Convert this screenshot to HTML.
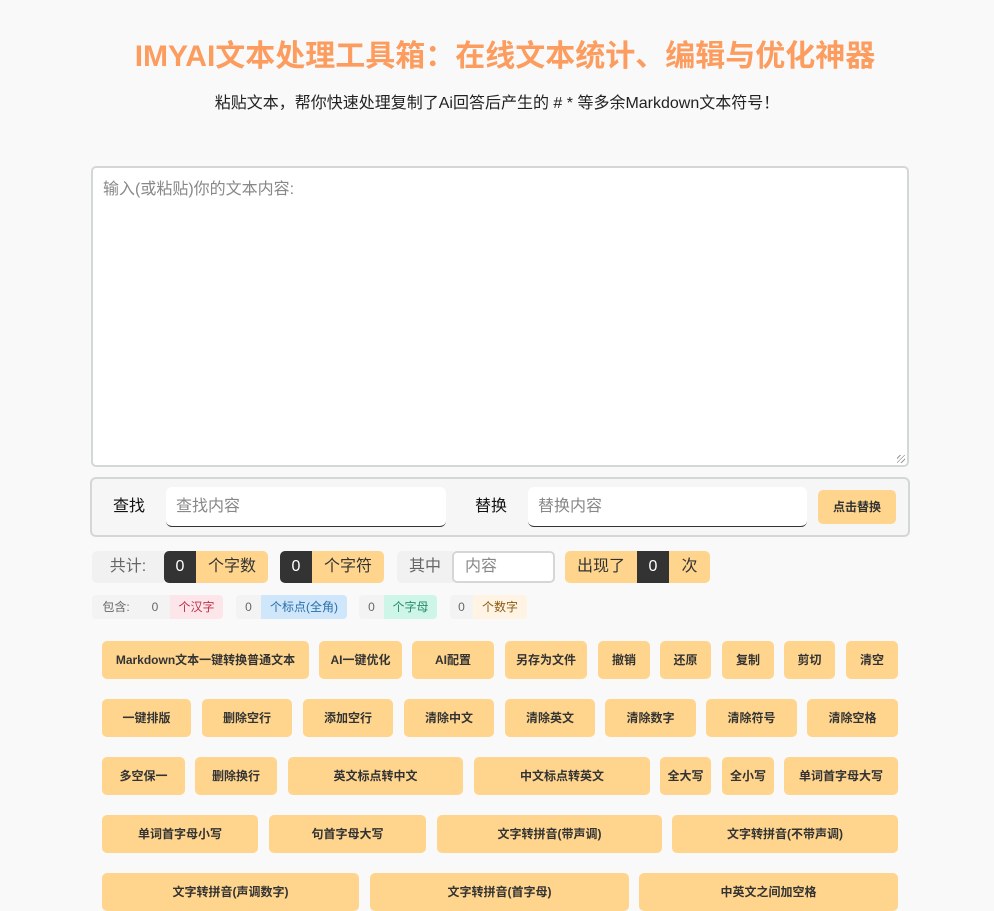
<!DOCTYPE html>
<html><head><meta charset="utf-8">
<style>
*{box-sizing:border-box;margin:0;padding:0}
body{width:994px;height:893px;overflow:hidden;background:#f9f9f9;font-family:"Liberation Sans","Noto Sans CJK SC",sans-serif;position:relative}
.a{position:absolute}
h1{position:absolute;left:8px;width:994px;top:37px;text-align:center;font-size:30px;font-weight:bold;color:#fc9c5f;line-height:40px}
.sub{left:0;width:994px;top:93px;text-align:center;font-size:16px;color:#222;line-height:22px}
.ta{left:91px;top:166px;width:818px;height:301px;border:2px solid #d3d8d7;border-radius:5px;background:#fff}
.ta span{position:absolute;left:10px;top:7px;font-size:16px;color:#888}
.grip{position:absolute;right:2px;bottom:2px;width:8px;height:8px;background:repeating-linear-gradient(135deg,transparent 0 2px,#999 2px 3px)}
.find{left:90px;top:477px;width:820px;height:60px;border:2px solid #d3d8d7;border-radius:6px;background:#f6f6f6}
.lbl{font-size:16px;color:#111;line-height:20px}
.inp{background:#fff;border-radius:6px;border-bottom:1.5px solid #333;font-size:16px;color:#888;padding-left:10px;line-height:40px}
.btn{position:absolute;background:#ffd58e;border-radius:5px;font-size:12px;font-weight:bold;color:#333;text-align:center;line-height:38px;white-space:nowrap}
.st{position:absolute;top:551px;height:32px;line-height:32px;font-size:16px;text-align:center}
.dk{background:#333;color:#fff}
.or{background:#ffd58e;color:#333}
.gr{background:#f1f1f1;color:#666}
.sm{position:absolute;top:595px;height:24px;line-height:24px;font-size:12px;text-align:center;color:#666}
</style></head><body>
<h1>IMYAI文本处理工具箱：在线文本统计、编辑与优化神器</h1>
<div class="a sub">粘贴文本，帮你快速处理复制了Ai回答后产生的 # * 等多余Markdown文本符号！</div>
<div class="a ta"><span>输入(或粘贴)你的文本内容:</span><div class="grip"></div></div>
<div class="a find"></div>
<div class="a lbl" style="left:113px;top:497px">查找</div>
<div class="a inp" style="left:166px;top:487px;width:280px;height:40px">查找内容</div>
<div class="a lbl" style="left:475px;top:497px">替换</div>
<div class="a inp" style="left:528px;top:487px;width:279px;height:40px">替换内容</div>
<div class="btn" style="left:818px;top:490px;width:78px;height:34px;line-height:34px">点击替换</div>

<div class="st gr" style="left:92px;width:72px;border-radius:5px 0 0 5px">共计:</div>
<div class="st dk" style="left:164px;width:32px;border-radius:5px 0 0 5px">0</div>
<div class="st or" style="left:196px;width:72px;border-radius:0 5px 5px 0">个字数</div>
<div class="st dk" style="left:280px;width:32px;border-radius:5px 0 0 5px">0</div>
<div class="st or" style="left:312px;width:72px;border-radius:0 5px 5px 0">个字符</div>
<div class="st gr" style="left:397px;width:56px;border-radius:5px 0 0 5px">其中</div>
<div class="st" style="left:452px;width:103px;background:#fff;border:2px solid #d3d8d7;border-radius:5px;text-align:left;padding-left:11px;color:#888;line-height:28px">内容</div>
<div class="st or" style="left:565px;width:72px;border-radius:5px 0 0 5px">出现了</div>
<div class="st dk" style="left:637px;width:32px">0</div>
<div class="st or" style="left:669px;width:41px;border-radius:0 5px 5px 0">次</div>

<div class="sm" style="left:92px;width:48px;background:#f3f3f3;border-radius:4px 0 0 4px">包含:</div>
<div class="sm" style="left:140px;width:30px;background:#f3f3f3">0</div>
<div class="sm" style="left:170px;width:53px;background:#fde6ea;color:#c0304a;border-radius:0 4px 4px 0">个汉字</div>
<div class="sm" style="left:236px;width:25px;background:#f3f3f3;border-radius:4px 0 0 4px">0</div>
<div class="sm" style="left:261px;width:86px;background:#cfe6fb;color:#2a6fa8;border-radius:0 4px 4px 0">个标点(全角)</div>
<div class="sm" style="left:359px;width:25px;background:#f3f3f3;border-radius:4px 0 0 4px">0</div>
<div class="sm" style="left:384px;width:53px;background:#cdf5e8;color:#2a8a6a;border-radius:0 4px 4px 0">个字母</div>
<div class="sm" style="left:450px;width:23px;background:#f3f3f3;border-radius:4px 0 0 4px">0</div>
<div class="sm" style="left:473px;width:54px;background:#fff4e4;color:#8a5a10;border-radius:0 4px 4px 0">个数字</div>

<div class="btn" style="left:102px;top:641px;width:207px">Markdown文本一键转换普通文本</div>
<div class="btn" style="left:319px;top:641px;width:83px">AI一键优化</div>
<div class="btn" style="left:412px;top:641px;width:82px">AI配置</div>
<div class="btn" style="left:505px;top:641px;width:82px">另存为文件</div>
<div class="btn" style="left:598px;top:641px;width:52px">撤销</div>
<div class="btn" style="left:660px;top:641px;width:51px">还原</div>
<div class="btn" style="left:722px;top:641px;width:52px">复制</div>
<div class="btn" style="left:784px;top:641px;width:51px">剪切</div>
<div class="btn" style="left:846px;top:641px;width:52px">清空</div>

<div class="btn" style="left:102px;top:699px;width:89px">一键排版</div>
<div class="btn" style="left:202px;top:699px;width:90px">删除空行</div>
<div class="btn" style="left:303px;top:699px;width:90px">添加空行</div>
<div class="btn" style="left:404px;top:699px;width:90px">清除中文</div>
<div class="btn" style="left:505px;top:699px;width:90px">清除英文</div>
<div class="btn" style="left:605px;top:699px;width:91px">清除数字</div>
<div class="btn" style="left:706px;top:699px;width:91px">清除符号</div>
<div class="btn" style="left:807px;top:699px;width:91px">清除空格</div>

<div class="btn" style="left:102px;top:757px;width:83px">多空保一</div>
<div class="btn" style="left:195px;top:757px;width:82px">删除换行</div>
<div class="btn" style="left:288px;top:757px;width:175px">英文标点转中文</div>
<div class="btn" style="left:474px;top:757px;width:176px">中文标点转英文</div>
<div class="btn" style="left:660px;top:757px;width:51px">全大写</div>
<div class="btn" style="left:722px;top:757px;width:52px">全小写</div>
<div class="btn" style="left:784px;top:757px;width:114px">单词首字母大写</div>

<div class="btn" style="left:102px;top:815px;width:156px">单词首字母小写</div>
<div class="btn" style="left:269px;top:815px;width:157px">句首字母大写</div>
<div class="btn" style="left:437px;top:815px;width:225px">文字转拼音(带声调)</div>
<div class="btn" style="left:672px;top:815px;width:226px">文字转拼音(不带声调)</div>

<div class="btn" style="left:102px;top:873px;width:257px">文字转拼音(声调数字)</div>
<div class="btn" style="left:370px;top:873px;width:259px">文字转拼音(首字母)</div>
<div class="btn" style="left:639px;top:873px;width:259px">中英文之间加空格</div>
</body></html>
